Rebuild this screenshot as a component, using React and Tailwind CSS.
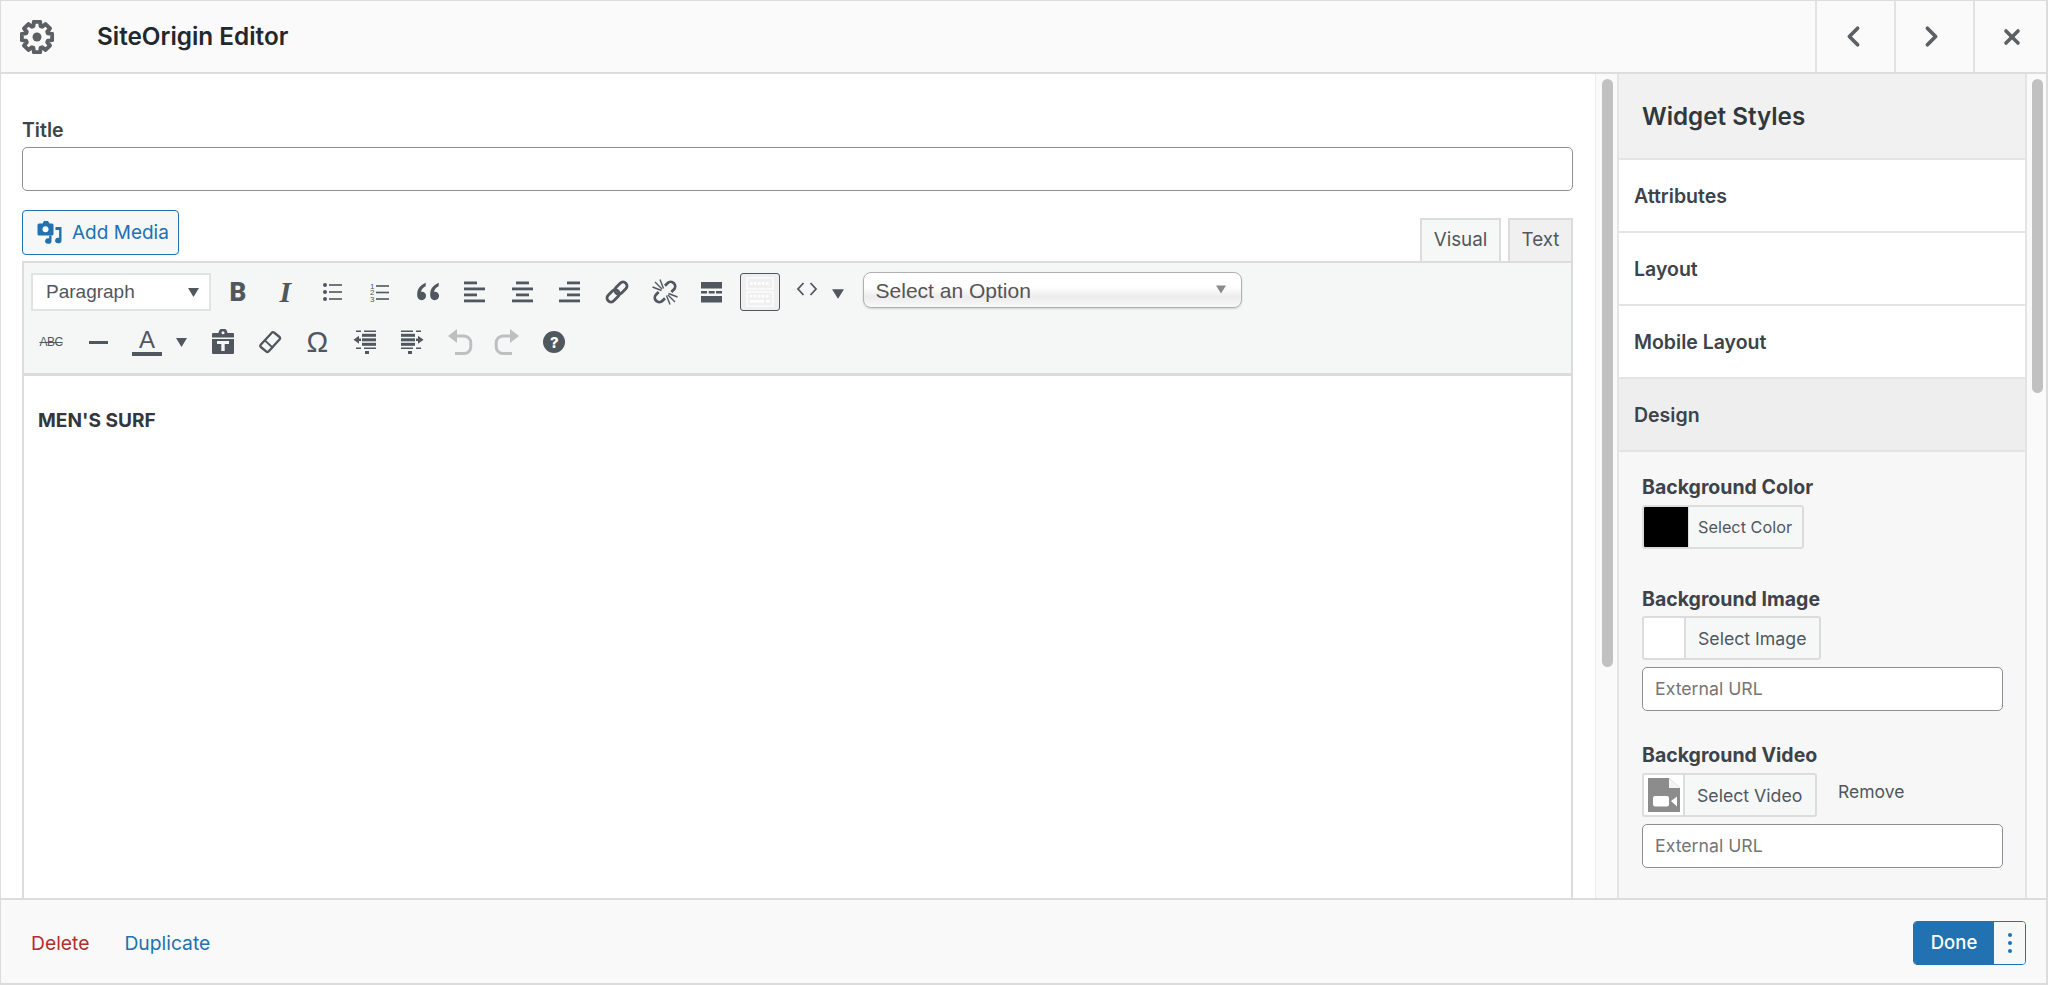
import React from "react";
import { ChevronLeft, ChevronRight, X } from "lucide-react";

const gearPath = (() => {
  const pts = [];
  const n = 8;
  const R = 15.5, r = 11.5, c = 17;
  for (let i = 0; i < n; i++) {
    const a = (i * 2 * Math.PI) / n - Math.PI / 2;
    const w = 0.2, w2 = 0.28;
    [[a - w2 - 0.04, r], [a - w, R], [a + w, R], [a + w2 + 0.04, r]].forEach(([t, q]) => {
      pts.push(`${(c + q * Math.cos(t)).toFixed(2)} ${(c + q * Math.sin(t)).toFixed(2)}`);
    });
  }
  return "M" + pts.join("L") + "Z";
})();

const Caret = ({ w = 11, h = 8, color = "#50575e", className = "" }) => (
  <svg width={w} height={h} viewBox="0 0 10 8" className={className}>
    <polygon points="0,0 10,0 5,8" fill={color} />
  </svg>
);

const Ic = ({ children, w = 24, h = 24, vb = "0 0 24 24" }) => (
  <svg width={w} height={h} viewBox={vb} fill="none">
    {children}
  </svg>
);

const C = "#50575e";

const Cell = ({ children, className = "" }) => (
  <div className={`w-[47.4px] h-[38px] shrink-0 flex items-center justify-center ${className}`}>{children}</div>
);

const Ul = () => (
  <Ic w={22} h={22} vb="0 0 22 22">
    {[4, 11, 18].map((y) => (
      <g key={y}>
        <circle cx="3" cy={y} r="2" fill={C} />
        <rect x="7" y={y - 0.8} width="13" height="1.6" fill={C} />
      </g>
    ))}
  </Ic>
);
const Ol = () => (
  <svg width="22" height="24" viewBox="0 0 22 24">
    {[["1", 6], ["2", 12.5], ["3", 19]].map(([t, y]) => (
      <g key={t}>
        <text x="1" y={y + 2.8} fontSize="8" fill={C} fontFamily="Liberation Sans, sans-serif">{t}</text>
        <rect x="7" y={y - 0.8} width="13" height="1.6" fill={C} />
      </g>
    ))}
  </svg>
);
const Quote = () => (
  <Ic w={26} h={24} vb="0 0 24 22">
    <path d="M10 2.5C5 4.5 2 8 2 13.5c0 3 1.7 5 4.2 5s4-1.8 4-4-1.5-3.8-3.7-3.8c-.4 0-.7 0-1 .1.6-2.2 2-3.7 4.3-5z" fill={C} />
    <path d="M22 2.5c-5 2-8 5.500-8 11 0 3 1.700 5 4.200 5s4-1.800 4-4-1.500-3.800-3.700-3.800c-.4 0-.7 0-1 .1.600-2.200 2-3.700 4.300-5z" fill={C} />
  </Ic>
);
const Align = ({ kind }) => {
  const rows = kind === "left" ? [[0, 13], [0, 21], [0, 13], [0, 21]] : kind === "center" ? [[4, 13], [0, 21], [4, 13], [0, 21]] : [[8, 13], [0, 21], [8, 13], [0, 21]];
  return (
    <Ic w={21} h={22} vb="0 0 21 22">
      {rows.map(([x, w], i) => (
        <rect key={i} x={x} y={i * 6 + 0.5} width={w} height={2.8} fill={C} />
      ))}
    </Ic>
  );
};
const Link = () => (
  <Ic w={28} h={28} vb="0 0 28 28">
    <g transform="rotate(-45 14 14)" stroke={C} strokeWidth="2.8">
      <rect x="1.500" y="10" width="14" height="8" rx="4" />
      <rect x="12.500" y="10" width="14" height="8" rx="4" />
    </g>
  </Ic>
);
const Unlink = () => (
  <Ic w={28} h={28} vb="0 0 28 28">
    <g transform="rotate(-45 14 14)" stroke={C} strokeWidth="2.800">
      <path d="M9.500 9.500H6a4.500 4.500 0 0 0 0 9h3.500" />
      <path d="M18.500 9.500H22a4.500 4.500 0 0 1 0 9h-3.500" />
    </g>
    <g stroke={C} strokeWidth="1.400">
      <path d="M12.500 10.500L9 1.500M10.500 12.500L1.500 9M11 11L4 4" />
      <path d="M15.500 17.500L19 26.500M17.500 15.500L26.500 19M17 17L24 24" />
    </g>
  </Ic>
);
const More = () => (
  <Ic w={21} h={22} vb="0 0 21 22">
    <rect x="0" y="1" width="21" height="6.500" fill={C} />
    <rect x="0" y="10" width="6" height="2.500" fill={C} />
    <rect x="7.700" y="10" width="6" height="2.500" fill={C} />
    <rect x="15" y="10" width="6" height="2.500" fill={C} />
    <rect x="0" y="15" width="21" height="6.500" fill={C} />
  </Ic>
);
const Kbd = () => (
  <svg width="28" height="30" viewBox="0 0 28 30" fill="none">
    <rect x="1" y="1" width="26" height="11" stroke="#fff" strokeWidth="1.200" />
    <rect x="1" y="15" width="26" height="14" stroke="#fff" strokeWidth="1.200" />
    {[4, 8, 12, 16, 20].map((x) => <rect key={x} x={x} y="5" width="2.500" height="3" fill="#fff" />)}
    {[4, 8, 12, 16, 20].map((x) => <rect key={x} x={x} y="18" width="2.500" height="2.500" fill="#fff" />)}
    <rect x="4" y="23" width="14" height="2.500" fill="#fff" />
    <rect x="20" y="23" width="4" height="2.500" fill="#fff" />
  </svg>
);
const Code = () => (
  <Ic w={22} h={16} vb="0 0 22 16">
    <path d="M7.500 2L2 8l5.500 6M14.500 2L20 8l-5.500 6" stroke={C} strokeWidth="1.800" />
  </Ic>
);
const Paste = () => (
  <Ic w={24} h={26} vb="0 0 24 26">
    <path d="M2 4h5.500a4.500 4.500 0 0 1 9 0H22a1 1 0 0 1 1 1v19a1 1 0 0 1-1 1H2a1 1 0 0 1-1-1V5a1 1 0 0 1 1-1z" fill={C} />
    <circle cx="12" cy="3.800" r="1.500" fill="#f5f7f7" />
    <rect x="1" y="8.500" width="22" height="1.500" fill="#f5f7f7" />
    <rect x="6" y="12" width="12" height="3" fill="#f5f7f7" />
    <rect x="10.300" y="12" width="3.400" height="10" fill="#f5f7f7" />
  </Ic>
);
const Eraser = () => (
  <Ic w={24} h={24} vb="0 0 24 24">
    <path d="M16 2.500l5.500 4.500a1.500 1.500 0 0 1 .2 2.200L10.500 21.500a1.500 1.500 0 0 1-2.100.1L2.800 17a1.500 1.500 0 0 1-.1-2.200L13.800 2.700A1.500 1.500 0 0 1 16 2.500z" stroke={C} strokeWidth="2.300" fill="#f5f7f7" />
    <path d="M7 10.500l8 7.500" stroke={C} strokeWidth="1.800" />
  </Ic>
);
const Outdent = ({ flip }) => (
  <svg width="24" height="26" viewBox="0 0 24 26" style={flip ? { transform: "scaleX(-1)" } : undefined}>
    <rect x="3" y="1.500" width="5" height="1.500" fill={C} />
    <rect x="11" y="1.500" width="12" height="1.500" fill={C} />
    <rect x="9" y="4.800" width="14" height="3" fill={C} />
    <rect x="9" y="9.300" width="14" height="3" fill={C} />
    <rect x="9" y="13.800" width="14" height="3" fill={C} />
    <polygon points="0.500,10.800 6,6.800 6,14.800" fill={C} />
    <rect x="5" y="9.600" width="3" height="2.400" fill={C} />
    <rect x="3" y="18.500" width="5" height="1.500" fill={C} />
    <rect x="11" y="18.500" width="12" height="1.500" fill={C} />
    <rect x="12" y="22" width="4" height="3" fill={C} />
  </svg>
);
const Undo = ({ flip }) => (
  <svg width="26" height="28" viewBox="0 0 26 28" style={flip ? { transform: "scaleX(-1)" } : undefined} fill="none">
    <polygon points="1,8 10,1 10,15" fill="#bdbfc1" />
    <path d="M9 8h8a6.800 6.800 0 0 1 6.800 7v3.500a6.800 6.800 0 0 1-6.800 7H8" stroke="#bdbfc1" strokeWidth="3" />
  </svg>
);
const Help = () => (
  <div className="w-[22px] h-[22px] rounded-full bg-[#50575e] flex items-center justify-center text-white text-[15px] font-extrabold leading-none">?</div>
);

const MediaIcon = () => (
  <svg width="26" height="26" viewBox="0 0 26 26">
    <path d="M2 3.500h3.500L7 1h4l1.500 2.500H15a1.500 1.500 0 0 1 1.500 1.500v9a1.500 1.500 0 0 1-1.500 1.500H2A1.500 1.500 0 0 1 .5 14V5A1.500 1.500 0 0 1 2 3.500z" fill="#2271b1" />
    <circle cx="8.500" cy="9.300" r="3" fill="#fff" />
    <path d="M18.500 7h6v13.500a3.200 2.800 0 1 1-2.400-2.700V10h-3.600z" fill="#2271b1" />
    <path d="M14.500 15.500v5.500a3.200 2.800 0 1 1-2.400-2.700v-2.800z" fill="#2271b1" />
  </svg>
);

const VideoFile = () => (
  <svg width="32" height="34" viewBox="0 0 32 34">
    <path d="M0 0h21l11 10v24H0z" fill="#8c8c8c" />
    <path d="M21 0l11 10H21z" fill="#f5f5f5" />
    <rect x="5" y="18" width="16" height="10.500" rx="2" fill="#fff" />
    <polygon points="23,23 29,18.500 29,28.500" fill="#fff" />
  </svg>
);

const SideRow = ({ children, active }) => (
  <div className={`h-[73px] shrink-0 flex items-center pl-[15px] pt-[2px] text-[19.500px] font-semibold text-[#3c434a] border-b-2 border-[#e4e4e4] ${active ? "bg-[#eeeeee]" : "bg-white"}`}>
    {children}
  </div>
);

const FieldLabel = ({ children }) => (
  <div className="text-[19.500px] leading-[24px] font-bold text-[#3c434a]">{children}</div>
);

const UrlInput = () => (
  <div className="w-[361px] h-[44px] rounded-[5px] border-[1.5px] border-[#8c8f94] bg-white flex items-center pl-[12px] text-[17.700px] text-[#757575] shrink-0">
    External URL
  </div>
);

export default function App() {
  return (
    <div className="w-[2048px] h-[985px] flex flex-col border-l border-r-2 border-b-2 border-t border-[#dcdcdc] bg-white overflow-hidden font-[Inter,sans-serif]">
      <header className="h-[73px] shrink-0 flex items-stretch bg-[#fafafa] border-b-2 border-[#dddddd]">
        <div className="flex items-center pl-[19px]">
          <svg width="34" height="34" viewBox="0 0 34 34" fill="none">
            <path d={gearPath} stroke="#5c6065" strokeWidth="4" strokeLinejoin="round" />
            <circle cx="17" cy="17" r="4.500" fill="#5c6065" />
          </svg>
          <div className="ml-[43px] text-[24.300px] font-semibold text-[#23282d]">SiteOrigin Editor</div>
        </div>
        <div className="ml-auto flex items-stretch">
          <div className="w-[79px] border-l-2 border-[#e2e2e2] flex items-center justify-center pr-[5px]">
            <ChevronLeft size={33} strokeWidth={2.7} color="#5c6065" />
          </div>
          <div className="w-[79px] border-l-2 border-[#e2e2e2] flex items-center justify-center pr-[6px]">
            <ChevronRight size={33} strokeWidth={2.7} color="#5c6065" />
          </div>
          <div className="w-[73px] border-l-2 border-[#e2e2e2] flex items-center justify-center pl-[2px]">
            <X size={24} strokeWidth={3.6} color="#5c6065" />
          </div>
        </div>
      </header>

      <div className="flex-1 min-h-0 flex overflow-hidden">
        <main className="w-[1594px] shrink-0 bg-white pl-[21px] pr-[22px] pt-[44px] flex flex-col overflow-hidden">
          <div className="h-[24px] leading-[24px] text-[19.500px] font-semibold text-[#3c434a]">Title</div>
          <div className="mt-[5px] h-[44px] shrink-0 rounded-[5px] border-[1.5px] border-[#8c8f94] bg-white"></div>
          <div className="mt-[19px] h-[51px] shrink-0 flex items-start">
            <div className="w-[157px] h-[45px] rounded-[4px] border-[1.5px] border-[#2271b1] bg-[#f6f7f7] flex items-center pl-[14px] text-[#2271b1] text-[19px] font-normal">
              <MediaIcon />
              <span className="ml-[9px] pt-[2px]">Add Media</span>
            </div>
            <div className="ml-auto self-end flex items-end">
              <div className="w-[81px] h-[43px] border-2 border-b-0 border-[#dcdcdc] bg-[#f6f7f7] flex items-center justify-center text-[18.800px] text-[#50575e]">Visual</div>
              <div className="ml-[7px] w-[65px] h-[43px] border-2 border-b-0 border-[#dcdcdc] bg-[#f0f0f1] flex items-center justify-center text-[18.800px] text-[#50575e]">Text</div>
            </div>
          </div>
          <div className="shrink-0 border-x-2 border-t-2 border-b-[3px] border-[#dcdcdc] bg-[#f5f7f7] pt-[10px] pb-[12px]">
            <div className="flex items-center h-[38px] pl-[7px]">
              <div className="w-[180px] h-[38px] shrink-0 border-2 border-[#e2e4e4] bg-white flex items-center pl-[13px] pr-[10px] text-[#50575e] text-[19px] font-['Liberation_Sans',Arial,sans-serif]">
                <span>Paragraph</span>
                <Caret w={11} h={9} className="ml-auto" />
              </div>
              <div className="w-[3.300px] shrink-0"></div>
              <Cell><span className="text-[26px] font-black text-[#50575e] font-[Roboto,sans-serif] leading-none">B</span></Cell>
              <Cell><span className="text-[30px] italic font-bold text-[#50575e] font-['Liberation_Serif',serif] leading-none">I</span></Cell>
              <Cell><Ul /></Cell>
              <Cell><Ol /></Cell>
              <Cell><Quote /></Cell>
              <Cell><Align kind="left" /></Cell>
              <Cell><Align kind="center" /></Cell>
              <Cell><Align kind="right" /></Cell>
              <Cell><Link /></Cell>
              <Cell><Unlink /></Cell>
              <Cell><More /></Cell>
              <div className="ml-[4px] w-[40px] h-[38px] shrink-0 rounded-[3px] border-[1.5px] border-[#50575e] bg-[#f0f0f1] flex items-center justify-center">
                <Kbd />
              </div>
              <div className="ml-[16px] mb-[6px] shrink-0 flex"><Code /></div>
              <Caret w={12} h={10} className="ml-[14px] mt-[3px] shrink-0" />
              <div className="ml-[19px] mb-[5px] w-[379px] h-[36px] shrink-0 rounded-[8px] border-[1.5px] border-[#b0b0b0] shadow-[0_1px_2px_rgba(0,0,0,0.15)] bg-[linear-gradient(#ffffff_40%,#ececec_70%,#f8f8f8)] flex items-center pl-[12px] pr-[15px] text-[21px] text-[#555555] font-['Liberation_Sans',Arial,sans-serif]">
                <span className="pt-[2px]">Select an Option</span>
                <Caret w={10} h={9} color="#8a8a8a" className="ml-auto" />
              </div>
            </div>
            <div className="flex items-center h-[38px] mt-[12px] pl-[3.300px]">
              <Cell><span className="text-[12px] text-[#50575e] line-through font-['Liberation_Sans',Arial,sans-serif] tracking-[-0.5px]">ABC</span></Cell>
              <Cell><div className="w-[19px] h-[3px] bg-[#50575e]"></div></Cell>
              <div className="w-[50px] shrink-0 flex flex-col items-center text-[#50575e]">
                <span className="text-[24px] leading-[22px] font-['Liberation_Sans',Arial,sans-serif]">A</span>
                <div className="w-[30px] h-[4px] bg-[#50575e] mt-[1px]"></div>
              </div>
              <div className="w-[18px] shrink-0 flex justify-center"><Caret w={11} h={9} /></div>
              <div className="w-[8.800px] shrink-0"></div>
              <Cell><Paste /></Cell>
              <Cell><Eraser /></Cell>
              <Cell><span className="text-[29px] leading-none text-[#50575e] font-['Liberation_Sans',Arial,sans-serif]">Ω</span></Cell>
              <Cell><Outdent /></Cell>
              <Cell><Outdent flip /></Cell>
              <Cell><Undo /></Cell>
              <Cell><Undo flip /></Cell>
              <Cell><Help /></Cell>
            </div>
          </div>
          <div className="flex-1 border-x-2 border-[#dcdcdc] bg-white pl-[14px] pt-[32px] text-[19.100px] leading-[24px] font-bold text-[#32373c]">
            MEN'S SURF
          </div>
        </main>

        <div className="w-[22px] shrink-0 bg-[#fafafa] border-l border-[#ececec] pl-[6px] pt-[5px]">
          <div className="w-[11px] h-[588px] rounded-full bg-[#c1c1c1]"></div>
        </div>

        <aside className="w-[410px] shrink-0 border-x-2 border-[#e4e4e4] bg-[#f7f7f7] flex flex-col overflow-hidden">
          <div className="h-[86px] shrink-0 flex items-center pl-[23px] pt-[2px] bg-[#f1f1f1] border-b-2 border-[#e4e4e4] text-[24.200px] font-semibold text-[#32373c]">Widget Styles</div>
          <SideRow>Attributes</SideRow>
          <SideRow>Layout</SideRow>
          <SideRow>Mobile Layout</SideRow>
          <SideRow active>Design</SideRow>
          <div className="pl-[23px] pt-[23px] flex flex-col">
            <FieldLabel>Background Color</FieldLabel>
            <div className="mt-[6px] w-[162px] h-[44px] shrink-0 flex items-stretch rounded-[3px] border-2 border-[#dcdcde] bg-[#f6f7f7] overflow-hidden">
              <div className="w-[44px] bg-black"></div>
              <div className="flex-1 flex items-center pl-[9px] pt-[1px] text-[16.300px] text-[#50575e] border-l border-[#dcdcde]">Select Color</div>
            </div>
            <div className="mt-[38px]"><FieldLabel>Background Image</FieldLabel></div>
            <div className="mt-[5px] w-[179px] h-[44px] shrink-0 flex items-stretch rounded-[3px] border-2 border-[#dcdcde] bg-[#f6f7f7] overflow-hidden">
              <div className="w-[42px] bg-white border-r-2 border-[#dcdcde]"></div>
              <div className="flex-1 flex items-center pl-[12px] pt-[2px] text-[17.700px] text-[#50575e]">Select Image</div>
            </div>
            <div className="mt-[7px]"><UrlInput /></div>
            <div className="mt-[32px]"><FieldLabel>Background Video</FieldLabel></div>
            <div className="mt-[6px] flex items-start">
              <div className="w-[175px] h-[44px] shrink-0 flex items-stretch rounded-[3px] border-2 border-[#dcdcde] bg-[#f6f7f7] overflow-hidden">
                <div className="w-[41px] bg-white border-r-2 border-[#dcdcde] flex items-center justify-center"><VideoFile /></div>
                <div className="flex-1 flex items-center pl-[12px] pt-[2px] text-[17.700px] text-[#50575e]">Select Video</div>
              </div>
              <div className="ml-[21px] mt-[7px] text-[17.500px] leading-[24px] text-[#50575e]">Remove</div>
            </div>
            <div className="mt-[7px]"><UrlInput /></div>
          </div>
        </aside>

        <div className="flex-1 bg-[#fafafa] pl-[5px] pt-[5px]">
          <div className="w-[11px] h-[314px] rounded-full bg-[#c1c1c1]"></div>
        </div>
      </div>

      <footer className="h-[85px] shrink-0 bg-[#f9f9f9] border-t-2 border-[#dcdcdc] flex items-center pl-[30px] pr-[20px] pt-[2px] text-[19.300px]">
        <span className="text-[#b32d2e] pt-[2px]">Delete</span>
        <span className="ml-[35px] text-[#2271b1] pt-[2px]">Duplicate</span>
        <div className="ml-auto w-[113px] h-[44px] flex rounded-[4px] border-[1.5px] border-[#2271b1] overflow-hidden">
          <div className="w-[80px] bg-[#2271b1] flex items-center justify-center text-white text-[18.500px] font-medium">Done</div>
          <div className="flex-1 bg-[#f6f7f7] flex flex-col items-center justify-center gap-[4px]">
            <div className="w-[4px] h-[4px] rounded-full bg-[#2271b1]"></div>
            <div className="w-[4px] h-[4px] rounded-full bg-[#2271b1]"></div>
            <div className="w-[4px] h-[4px] rounded-full bg-[#2271b1]"></div>
          </div>
        </div>
      </footer>
    </div>
  );
}
